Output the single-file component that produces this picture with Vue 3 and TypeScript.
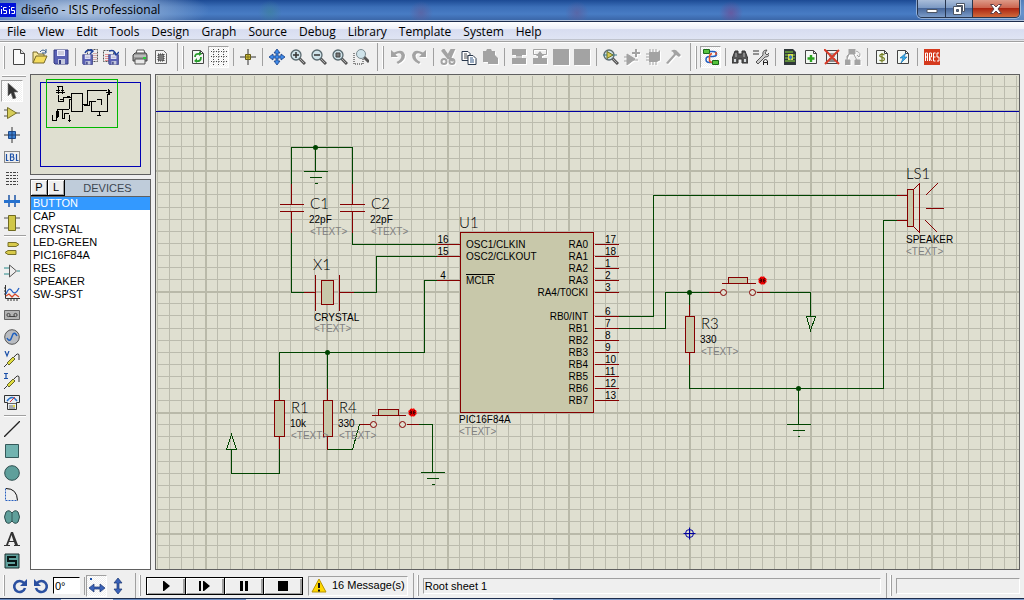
<script setup lang="ts">
import { ref } from 'vue'

interface Tool { id: string; label: string; pressed?: boolean; off?: boolean }
interface Label { x: number; y: number; t: string; kind: string }

const menus = ['File', 'View', 'Edit', 'Tools', 'Design', 'Graph', 'Source', 'Debug', 'Library', 'Template', 'System', 'Help']
const devices = ['BUTTON', 'CAP', 'CRYSTAL', 'LED-GREEN', 'PIC16F84A', 'RES', 'SPEAKER', 'SW-SPST']
const selected = ref('BUTTON')
const angle = ref('0°')

const tool = (id: string, label: string, flags: Partial<Tool> = {}): Tool => ({ id, label, ...flags })

// Bars hold groups, groups hold runs of buttons parted by a thin line.
const bars: Tool[][][] = [
  [
    [tool('new', 'New'), tool('open', 'Open'), tool('save', 'Save')],
    [tool('importSec', 'Import section'), tool('exportSec', 'Export section')],
    [tool('print', 'Print'), tool('area', 'Set area')]
  ],
  [
    [tool('redraw', 'Redraw'), tool('grid', 'Grid', { pressed: true })],
    [tool('origin', 'Origin')],
    [tool('pan', 'Pan'), tool('zoomIn', 'Zoom in'), tool('zoomOut', 'Zoom out'), tool('zoomAll', 'Zoom all'), tool('zoomArea', 'Zoom area')]
  ],
  [
    [tool('undo', 'Undo', { off: true }), tool('redo', 'Redo', { off: true })],
    [tool('cut', 'Cut', { off: true }), tool('copy', 'Copy'), tool('paste', 'Paste', { off: true })],
    [tool('blockCopy', 'Block copy', { off: true }), tool('blockMove', 'Block move', { off: true }), tool('block', 'Block rotate', { off: true }), tool('block', 'Block delete', { off: true })],
    [tool('pick', 'Pick device'), tool('make', 'Make device', { off: true }), tool('pack', 'Packaging tool', { off: true }), tool('hammer', 'Decompose', { off: true })]
  ],
  [
    [tool('router', 'Wire autorouter', { pressed: true })],
    [tool('find', 'Search and tag'), tool('assign', 'Property assignment')],
    [tool('explorer', 'Design explorer'), tool('addSheet', 'New sheet'), tool('delSheet', 'Remove sheet'), tool('parent', 'Exit to parent', { off: true })],
    [tool('bill', 'Bill of materials'), tool('erc', 'Electrical rule check')],
    [tool('ares', 'Netlist to ARES')]
  ]
]

const modes: Tool[][] = [
  [tool('pointer', 'Selection', { pressed: true }), tool('component', 'Component'), tool('junction', 'Junction dot'), tool('lbl', 'Wire label'), tool('script', 'Text script'), tool('bus', 'Bus'), tool('subcircuit', 'Subcircuit')],
  [tool('terminal', 'Terminals'), tool('devicePin', 'Device pins'), tool('graph', 'Graph'), tool('tape', 'Tape recorder'), tool('generator', 'Generator'), tool('vprobe', 'Voltage probe'), tool('iprobe', 'Current probe'), tool('meter', 'Instruments')],
  [tool('line', 'Line'), tool('box', 'Box'), tool('circle', 'Circle'), tool('arc', 'Arc'), tool('shape', 'Path'), tool('letter', 'Text'), tool('symbol', 'Symbol')]
]

const lens = '<path d="M9 9l6 6" stroke="#555" stroke-width="3"/><path d="M10 10l4 4" stroke="#aaa"/><circle cx="6" cy="6" r="5" fill="#cfe3ea" stroke="#5a6a70" stroke-width="1.3"/>'
const sheet = '<path d="M2.500 1.500h8l3 3v10h-11z" fill="#f4f8f4" stroke="#444"/><path d="M10.500 1.500v3h3" fill="none" stroke="#444"/>'
const disk = '<path d="M1 1h14v14H2l-1-1z" fill="#5b62b4" stroke="#353b80"/><path d="M4 1h8v6H4z" fill="#eef"/><path d="M5 10h7v5H5z" fill="#c4c8dd"/><path d="M6 11h2v4H6z" fill="#353b80"/><path d="M5 3h6M5 5h6" stroke="#aab"/>'
const G = '#a3a3a3'

const icons: Record<string, string> = {
  new: '<path d="M2.500.500h7l4 4v11h-11z" fill="#fafafa" stroke="#444"/><path d="M9.500.500v4h4" fill="#ddd" stroke="#444"/>',
  open: '<path d="M1 14V3h4l1 2h6v3" fill="#f5e79a" stroke="#77692a"/><path d="M1 14l3-7h11l-3 7z" fill="#f4dc5e" stroke="#77692a"/><path d="M8 3q3-4 6 0M14 0v4h-4" fill="none" stroke="#345a88"/>',
  save: disk,
  importSec: `<path d="M5.500.500h10v12h-10z" fill="#eee" stroke="#555" stroke-dasharray="2 1"/><path d="M12 4v7M14 4v7" stroke="#b66" stroke-dasharray="1 1"/><g transform="translate(0 5) scale(.7)">${disk}</g><path d="M3 4q2-4 7-2M8 0l3 2-3 3" fill="none" stroke="#1d3f9a" stroke-width="1.400"/>`,
  exportSec: `<path d="M.500 1.500h10v11h-10z" fill="#eee" stroke="#555" stroke-dasharray="2 1"/><path d="M3 5v7M5 5v7" stroke="#d33" stroke-dasharray="1 1"/><g transform="translate(5 5) scale(.7)">${disk}</g><path d="M6 2q6-2 7 4M11 3l2 3 3-3" fill="none" stroke="#1d3f9a" stroke-width="1.400"/>`,
  print: '<path d="M4 5l1-4h7l1 4" fill="#fff" stroke="#555"/><path d="M1 6l2-2h11l1 2v6H1z" fill="#9a9a9a" stroke="#444"/><path d="M3 10h10v5H3z" fill="#e8e8e8" stroke="#555"/><path d="M2 7h12" stroke="#ddd"/><path d="M11 8h3v2h-3z" fill="#2ccb3a"/>',
  area: '<path d="M2.500 1.500h8l3 3v10h-11z" fill="#f2f2f2" stroke="#666"/><path d="M5 5h6v7H5z" fill="#777" stroke="#333" stroke-dasharray="1 1"/>',
  redraw: sheet + '<path d="M5 8q0-4 5-3M11 8q0 5-5 4" fill="none" stroke="#279b2b" stroke-width="1.800"/><path d="M9 2l3 3-3 2zM7 9l-3 3 3 2z" fill="#279b2b"/>',
  grid: '<path d="M2.500 0v16M7.500 0v16M12.500 0v16M0 2.500h16M0 7.500h16M0 12.500h16" stroke="#444" stroke-dasharray="1 1.500"/>',
  origin: '<path d="M8 0v16M0 8h16" stroke="#333"/><path d="M5.500 5.500h5v5h-5z" fill="#d4c23a" stroke="#5f5618"/><path d="M8 5v6M5 8h6" stroke="#7a701c"/>',
  pan: '<path d="M8 0l3 4H9v3h3V5l4 3-4 3V9H9v3h2l-3 4-3-4h2V9H4v2L0 8l4-3v2h3V4H5z" fill="#3f8ae8" stroke="#173f86" stroke-width=".8"/>',
  zoomIn: lens + '<path d="M3 6h6M6 3v6" stroke="#333" stroke-width="1.500"/>',
  zoomOut: lens + '<path d="M3 6h6" stroke="#333" stroke-width="1.500"/>',
  zoomAll: lens + '<path d="M4 4h4v4H4z" fill="#777" stroke="#444"/>',
  zoomArea: `<path d="M1 4v11h9V7" fill="none" stroke="#222" stroke-dasharray="1 1"/><g transform="translate(2 -1)"><path d="M9 9l5 5" stroke="#555" stroke-width="3"/><circle cx="6" cy="6" r="4.500" fill="#cfe3ea" stroke="#7a8a90"/></g>`,
  undo: `<path d="M1 1v7h7L5.500 5.500q5-3 6 1 0 4-5 6.500L8 15q7-3 7-9Q13-1 4 3.500z" fill="${G}"/>`,
  redo: `<path d="M15 1v7H8l2.500-2.500q-5-3-6 1 0 4 5 6.500L8 15Q1 12 1 6 3-1 12 3.500z" fill="${G}"/>`,
  cut: `<path d="M3 0l5 7 4-7h2l-4 9 3 3M2 1l7 9" stroke="${G}" stroke-width="2.500" fill="none"/><circle cx="4" cy="12.500" r="2.500" fill="none" stroke="${G}" stroke-width="2"/><circle cx="12" cy="12.500" r="2.500" fill="none" stroke="${G}" stroke-width="2"/>`,
  copy: '<path d="M1 2.500h6l2 2v7H1z" fill="#fff" stroke="#29384c"/><path d="M3 5h3M3 7h4M3 9h4" stroke="#555"/><path d="M7 6.500h5l3 3v6H7z" fill="#fff" stroke="#29384c"/><path d="M9 9h3M9 11h4M9 13h4" stroke="#345a88"/>',
  paste: `<path d="M1 2h3l1-2h4l1 2h3v4l3 3v6H6v-2H1z" fill="${G}"/>`,
  blockCopy: `<path d="M1 0h14v6h-4v3h4v6H1V9h4V6H1z" fill="${G}"/><path d="M5 8h6" stroke="#ededed"/>`,
  blockMove: `<path d="M1.500.500h13v5h-13z" fill="none" stroke="${G}"/><path d="M8 2l4 5h-2v2h5v6H1V9h5V7H4z" fill="${G}"/>`,
  block: `<path d="M0 0h16v16H0z" fill="${G}"/>`,
  pick: lens + '<path d="M0 6h14" stroke="#387882"/><path d="M4 2.500v7l6-3.500z" fill="#d8c850" stroke="#687228"/>',
  make: `<path d="M12 0v8M8 4h8" stroke="${G}" stroke-width="2"/><path d="M3 5l8 5-8 6zM0 8h4M0 12h4M9 11h5" fill="${G}" stroke="${G}"/>`,
  pack: `<path d="M4 3h9l2-2v10l-3 2H4z" fill="${G}"/><path d="M5 0v16M8 0v16M11 0v16M1 5h14M1 8h14M1 11h14" stroke="${G}"/>`,
  hammer: `<path d="M5 2q4-3 7 1l3 3-2 2-3-2-8 9-2-1 8-9-1-2z" fill="${G}"/>`,
  router: '<path d="M7 2.500h3q3.500 0 3.500 2.500T10 7.500H6.500Q3 7.500 3 10.500t3.500 3H9" fill="none" stroke="#1f5ec2" stroke-width="1.500"/><path d="M13 3v3M9 4.500Q6.500 5 6.500 8v3q0 2.500 3 2.500" fill="none" stroke="#e0522c" stroke-width="1.500"/><path d="M.500.500h6v4h-6zM9.500 11.500h6v4h-6z" fill="#57c43e" stroke="#1c6a18"/>',
  find: '<path d="M3 2h3v3h4V2h3l3 8v4h-6v-4H6v4H0v-4z" fill="#555" stroke="#333"/><path d="M2 10h2v3H2zM12 10h2v3h-2z" fill="#d7dcdf"/><path d="M4 4v4M12 4v4" stroke="#bbb"/>',
  assign: '<path d="M0 2h6M0 5h6" stroke="#333"/><path d="M3 13l7-7q-1-5 4-5l-2 3 2 2 2-2q1 4-4 4l-7 7z" fill="#ccc" stroke="#555"/><path d="M10.500 16v-4l2-2 2 2v4M10.500 13.500h4" fill="none" stroke="#222"/>',
  explorer: '<path d="M2 0h9l3 3v13H2z" fill="#30383a"/><path d="M3 3h8M3 6h10M3 9h10M3 12h10" stroke="#8fe03c"/><path d="M6 5h5v6H6z" fill="#d9e04c"/><path d="M8.500 6l2 2-2 3-2-3z" fill="#3a78c0"/>',
  addSheet: sheet + '<path d="M8 6v7M4.500 9.500h7" stroke="#2aa320" stroke-width="2.400"/>',
  delSheet: '<path d="M2.500 1.500h11v13h-11z" fill="#eee" stroke="#444"/><path d="M5 9h6v4H5z" fill="#888"/><path d="M5 5h6M5 7h6" stroke="#555"/><path d="M0 0l15 15M15 1L1 15" stroke="#d63a28" stroke-width="2"/>',
  parent: `<path d="M4 0h6v5H4zM0 11h5v5H0zM10 11h5v5h-5zM2 11V7l3-3M12 11L8 4" fill="${G}" stroke="${G}"/><path d="M11 2q6 2 3 6l-2-2" fill="none" stroke="${G}"/>`,
  bill: sheet + '<path d="M10.500 6q-2-1.500-4-.500-2 2 1.500 2.700 3.500 1 2 3-2 1.300-4.500 0M8 4v9.500" fill="none" stroke="#79832b" stroke-width="1.300"/>',
  erc: sheet + '<path d="M11 4L5 9h3l-2 5 6-6H9z" fill="#35b0ed" stroke="#1664a6" stroke-width=".6"/>',
  ares: '<path d="M0 0h16v16H0z" fill="#d53a1e"/><path d="M1.500 12V4h2v8M1.500 8h2M5.500 12V4h2v4h-2l2 4M11.500 4h-2v8h2M9.500 8h2M15 4h-2v4h2v4h-2" fill="none" stroke="#fff"/>',
  pointer: '<path d="M4 0v13l3-3 2 6 3-1-2-6h4z" fill="#333" stroke="#777" stroke-width=".6"/>',
  component: '<path d="M0 5h4M0 11h4M12 8h4" stroke="#555"/><path d="M3.500 2.500v11l9-5.500z" fill="#d6cc58" stroke="#777028"/>',
  junction: '<path d="M8 0v16M0 8h16" stroke="#333"/><path d="M4.500 4.500h7v7h-7z" fill="#3e82d4" stroke="#1e4a8a"/><path d="M8 4v8M4 8h8" stroke="#1e3f70"/>',
  lbl: '<path d="M.500 2.500h15v11H.500z" fill="none" stroke="#222" stroke-dasharray="1 1"/><path d="M2.500 5v6.500h2M6.500 5h2q1 0 1 1.500t-1 1.500q1.500 0 1.500 1.500T8.500 11.500h-2zM6.500 8h2M12.500 5v6.500h2" fill="none" stroke="#1b50a8" stroke-width="1.200"/>',
  script: '<path d="M2 1.500h12M2 4.500h12M2 7.500h12M2 10.500h12M2 13.500h12" stroke="#444" stroke-dasharray="3 1 2 1"/>',
  bus: '<path d="M5 2v12M11 2v12" stroke="#1d55a8" stroke-width="1.500"/><path d="M0 8.500h16" stroke="#2672cf" stroke-width="3"/>',
  subcircuit: '<path d="M0 3h4M0 13h4M12 3h4M12 13h4" stroke="#555"/><path d="M4.500.500h7v15h-7z" fill="#d0c748" stroke="#706a20"/>',
  terminal: '<path d="M4 1.500h8l3 2-3 2H4zM12 9.500H4l-3 2 3 2h8z" fill="#d8ca4a" stroke="#77702a"/>',
  devicePin: '<path d="M0 5h5M0 11h5M13 8h3" stroke="#278a8a"/><path d="M5.500 2v12l7-6z" fill="#eee" stroke="#555"/>',
  graph: '<path d="M1.500 0v13.500H16M4 13v3M7 13v3M10 13v3M13 13v3M0 3h2M0 6h2M0 9h2" stroke="#333" fill="none"/><path d="M2 9q3-8 6-3t7-3" fill="none" stroke="#2860c0" stroke-width="1.300"/><path d="M2 11l3-2 3 3 3-3 4 3" fill="none" stroke="#d84828" stroke-width="1.300"/>',
  tape: '<path d="M.500 3.500h15v9H.500z" fill="#b4b4b4" stroke="#666"/><circle cx="4.500" cy="8" r="1.600" fill="none" stroke="#444"/><circle cx="11.500" cy="8" r="1.600" fill="none" stroke="#444"/><path d="M5 9.500h6" stroke="#444"/>',
  generator: '<circle cx="8" cy="8" r="7.300" fill="#b9bcc1" stroke="#555"/><path d="M3 9q2 4 4 1l2-5q2-2 4 2" fill="none" stroke="#1e60bf" stroke-width="1.500"/>',
  vprobe: '<path d="M1 0l2 5 2-5" fill="none" stroke="#1b50a8" stroke-width="1.200"/><path d="M0 16l3-3M10 6q4-5 5-2v5" fill="none" stroke="#333"/><path d="M3 12l6-6 2 2-6 6z" fill="#e0dc40" stroke="#66652a"/>',
  iprobe: '<path d="M0 .500h4M2 .500v5M0 5.500h4" fill="none" stroke="#1b50a8" stroke-width="1.200"/><path d="M0 16l3-3M10 6q4-5 5-2v5" fill="none" stroke="#333"/><path d="M3 12l6-6 2 2-6 6z" fill="#e0dc40" stroke="#66652a"/>',
  meter: '<path d="M.500.500h15v7h-3v7h-9v-7h-3z" fill="#e8eef2" stroke="#333"/><path d="M3 6q5-7 10 0" fill="none" stroke="#2870c8" stroke-width="1.400"/><path d="M6 7l5-5" stroke="#d33"/><path d="M4 8.500h8M5 11h6M5 13h6" stroke="#666"/><path d="M9 10h2v2H9z" fill="#e6d840"/>',
  line: '<path d="M0 16L16 0" stroke="#222" stroke-width="1.300"/>',
  box: '<path d="M1.500 1.500h13v13h-13z" fill="#72b3b0" stroke="#35595a"/>',
  circle: '<circle cx="8" cy="8" r="7.300" fill="#5f9f9b" stroke="#2f4f50"/>',
  arc: '<path d="M1.500 1.500v12h12" fill="none" stroke="#2860c0" stroke-dasharray="2 1"/><path d="M2 1.500q11 0 11.500 12" fill="none" stroke="#111"/>',
  shape: '<path d="M8 4Q5 0 2 3q-3 5 0 10 3 3 6-1 3 4 6 1 3-5 0-10-3-3-6 1z" fill="#5f9f9b" stroke="#2f4f50"/><path d="M8 4v8" stroke="#35595a"/>',
  letter: '<path d="M7 1h2l5 13h2v1h-6v-1h1l-1-3H5l-1 3h2v1H0v-1h2zM5.500 10H9.500L7.500 4z" fill="#333"/>',
  symbol: '<path d="M1 1h14v14H1z" fill="#5fa09c" stroke="#1b2c2d"/><path d="M12 4H4v4h8v4H4" fill="none" stroke="#0a1616" stroke-width="2"/>',
  cw: '<path d="M12 5a5.500 5.500 0 1 0 1 5" fill="none" stroke="#2b50a0" stroke-width="2.600"/><path d="M15 1v7H8z" fill="#2b50a0"/>',
  ccw: '<path d="M4 5a5.500 5.500 0 1 1-1 5" fill="none" stroke="#2b50a0" stroke-width="2.600"/><path d="M1 1v7h7z" fill="#2b50a0"/>',
  mirrorX: '<path d="M1 0l2 2M3 0L1 2" stroke="#1b50a8"/><path d="M0 10l5-4v3h6V6l5 4-5 4v-3H5v3z" fill="#3a62b8" stroke="#1a3570" stroke-width=".7"/>',
  mirrorY: '<path d="M8 0l4 5H9v6h3l-4 5-4-5h3V5H4z" fill="#3a62b8" stroke="#1a3570" stroke-width=".7"/>',
  play: '<path d="M5 3h1l6 5-6 5H5z"/>',
  step: '<path d="M2 3h2v10H2zM6 3h1l6 5-6 5H6z"/>',
  pause: '<path d="M4 3h3v10H4zM9 3h3v10H9z"/>',
  stop: '<path d="M3 3h10v10H3z"/>',
  warn: '<path d="M8 1l7 13H1z" fill="#ffd800" stroke="#b89400"/><path d="M8 5v5M8 11.500v2" stroke="#111" stroke-width="2"/>'
}

const runControls = [tool('play', 'Play'), tool('step', 'Step'), tool('pause', 'Pause'), tool('stop', 'Stop')]

// Grid lines radiate from the sheet origin, ten minor steps to a major one.
const originX = 689
const originY = 533
const step = 12.1
const lattice = (start: number, shift: number, major: boolean): number[] => {
  const out: number[] = []
  for (let k = -50; k <= 150; k++) {
    if ((k % 10 === 0) === major) out.push(Math.floor(start + shift + step * k))
  }
  return out
}
const minorPath = lattice(originX, 0.85, false).map(x => `M${x} 75V3000`).join('') +
  lattice(originY, 0.7, false).map(y => `M156 ${y}H4000`).join('')
const majorX = lattice(originX, 0.85, true)
const majorY = lattice(originY, 0.7, true)

const wires = [
  'M291 183V147H352V183', 'M315 147V171M303 171H327M309 177H321M314 183H317',
  'M291 232V292H303', 'M352 232V244H436', 'M353 292H376V256H436',
  'M436 280H424V352H279V388', 'M327 352V388', 'M279 448V473H231V449',
  'M231 434L226 449H236Z', 'M327 449H352L359 424',
  'M418 424H432V472M420 472H444M426 478H438M431 484H434',
  'M618 316H653V195H896', 'M618 328H665V292H708', 'M689 292V304',
  'M769 292H810V316', 'M806 316H815L810 330Z', 'M689 364V388H883V220H896',
  'M798 388V424M786 424H810M792 430H804M797 436H799'
].join('')

const rightPins: [string, number, string][] = [
  ['RA0', 244, '17'], ['RA1', 256, '18'], ['RA2', 268, '1'], ['RA3', 280, '2'], ['RA4/T0CKI', 292, '3'],
  ['RB0/INT', 316, '6'], ['RB1', 328, '7'], ['RB2', 340, '8'], ['RB3', 352, '9'], ['RB4', 364, '10'],
  ['RB5', 376, '11'], ['RB6', 388, '12'], ['RB7', 400, '13']
]
const leftPins: [string, number, string][] = [['OSC1/CLKIN', 244, '16'], ['OSC2/CLKOUT', 256, '15'], ['MCLR', 280, '4']]

const leads = [
  'M291 183V204M279 204H303M279 211H303M291 211V232',
  'M352 183V204M339 204H364M339 211H364M352 211V232',
  'M303 292H315M315 274V310M339 274V310M339 292H353',
  'M279 388V400M279 436V448M327 388V400M327 436V449',
  'M359 424H370M371 415H405M406 424H418',
  'M708 292H720M721 283H755M756 292H769',
  'M689 304V316M689 352V364',
  'M896 195H907M896 220H907M919 183V232M913 189L919 183M913 226L919 232',
  'M925 195L937 183M925 208H943M925 220L937 232',
  ...rightPins.map(p => `M594 ${p[1]}H618`),
  ...leftPins.map(p => `M436 ${p[1]}H460`)
].join('')

const bodies = [
  [460, 232, 133, 180], [321, 280, 12, 24], [274, 400, 10, 36], [323, 400, 9, 36],
  [378, 409, 20, 6], [728, 277, 19, 6], [685, 316, 9, 36], [907, 189, 6, 37]
]
const dots = [[315, 147], [327, 352], [689, 292], [798, 388]]
const contacts = [[373, 424], [402, 424], [723, 292], [752, 292]]
const toggles = [[412, 412], [762, 280]]

const part = (x: number, y: number, name: string, value: string): Label[] => [
  { x: x + 1, y, t: name, kind: 'name' },
  { x, y: y + 14, t: value, kind: 'value' },
  { x: x + 1, y: y + 26, t: '<TEXT>', kind: 'note' }
]
const label = (x: number, y: number, t: string, kind: string): Label => ({ x, y, t, kind })
const labels: Label[] = [
  ...part(309, 209, 'C1', '22pF'), ...part(370, 209, 'C2', '22pF'),
  ...part(290, 413, 'R1', '10k'), ...part(338, 413, 'R4', '330'), ...part(700, 329, 'R3', '330'),
  label(313, 270, 'X1', 'name'), label(314, 321, 'CRYSTAL', 'value'), label(314, 332, '<TEXT>', 'note'),
  label(459, 228, 'U1', 'name'), label(459, 423, 'PIC16F84A', 'value'), label(459, 435, '<TEXT>', 'note'),
  label(906, 179, 'LS1', 'name'), label(906, 243, 'SPEAKER', 'value'), label(906, 255, '<TEXT>', 'note')
]
</script>

<template>
  <div class="app">
    <header class="title">
      <svg class="logo" width="16" height="14" viewBox="0 0 16 14" aria-hidden="true">
        <path d="M0 0h16v14H0z" fill="#0012d8" />
        <path d="M1.500 6v5M1.500 3v1M6.500 4.500h-3v3h3v3h-3M9.500 6v5M9.500 3v1M14.500 4.500h-3v3h3v3h-3" fill="none" stroke="#fff" />
      </svg>
      <h1>diseño - ISIS Professional</h1>
      <div class="window-buttons">
        <button type="button" class="min" aria-label="Minimize"><svg width="14" height="12" viewBox="0 0 14 12"><path d="M2 6.500h10v3H2z" fill="#fff" stroke="#4c5564" /></svg></button>
        <button type="button" class="max" aria-label="Restore"><svg width="14" height="14" viewBox="0 0 14 14"><path d="M4.500 1.500h8v8h-2v-6h-6z" fill="#fff" stroke="#4c5564" /><path d="M1.500 4.500h8v8h-8z" fill="#fff" stroke="#4c5564" /><path d="M4.500 7.500h2v2h-2z" fill="#56749e" stroke="#4c5564" /></svg></button>
        <button type="button" class="close" aria-label="Close"><svg width="14" height="12" viewBox="0 0 14 12"><path d="M1.500 1.500h3l2.500 2.500 2.500-2.500h3L9 6l3.500 4.500h-3L7 8l-2.500 2.500h-3L5 6z" fill="#fff" stroke="#5e4048" /></svg></button>
      </div>
    </header>

    <nav class="menu" aria-label="Main menu">
      <button v-for="m in menus" :key="m" type="button">{{ m }}</button>
    </nav>

    <div class="toolbar">
      <div v-for="(bar, b) in bars" :key="b" class="bar">
        <div v-for="(run, r) in bar" :key="r" class="run">
          <button v-for="(t, i) in run" :key="i" type="button" class="tool" :class="{ pressed: t.pressed }" :disabled="t.off" :aria-label="t.label">
            <svg width="16" height="16" viewBox="0 0 16 16" fill="#000" v-html="icons[t.id]"></svg>
          </button>
        </div>
      </div>
    </div>

    <main class="work">
      <div class="modes">
        <div v-for="(run, r) in modes" :key="r" class="mode-run">
          <button v-for="t in run" :key="t.id" type="button" class="mode" :class="{ pressed: t.pressed }" :aria-label="t.label">
            <svg width="16" height="16" viewBox="0 0 16 16" v-html="icons[t.id]"></svg>
          </button>
        </div>
      </div>

      <aside class="side">
        <div class="overview">
          <svg width="119" height="99" viewBox="0 0 119 99" fill="none" shape-rendering="crispEdges" role="img" aria-label="Sheet overview">
            <path d="M9.500 7.500h100v84h-100z" stroke="#0000b4" />
            <path d="M15.500 4.500h71v48h-71z" stroke="#00b800" />
            <path d="M40.500 18.500h11v18h-11z" stroke="#000" />
            <path d="M26 11.500h5M27.500 12v7M31.500 11v8M25 17.500h9M25 15.500h4M30 15.500h3M27.500 20v6h5v-4M29 24.500h4M29 26.500h4M32 22.500h8M36 21.500h3M39.500 24.500h-1v9M26 34.500h12M26.500 34v9M27.500 36v6M31.500 35v8h2v-5M21.500 40v5h4v-9M34 38.500h4M38.500 40v7M37 45.500h3M51 29.500h5v-14h20M53 30.500h5v-4h2M75 17.500h6M77.500 14v6M78.500 15v5M76.500 19v17H60.500v-9M59 26.500h6M66 24.500h4v5M68.500 36v5M66 40.500h4" stroke="#000" />
          </svg>
        </div>
        <section class="devices">
          <div class="devices-head">
            <button type="button" aria-label="Pick devices">P</button>
            <button type="button" aria-label="Library manager">L</button>
            <h2>DEVICES</h2>
          </div>
          <ul role="listbox" aria-label="Devices">
            <li v-for="d in devices" :key="d" role="option" :aria-selected="d === selected" :class="{ selected: d === selected }" @click="selected = d">{{ d }}</li>
          </ul>
        </section>
      </aside>

      <div class="canvas">
        <svg class="sheet" width="100%" height="100%" role="img" aria-label="Schematic sheet">
          <g transform="translate(-156 -75)">
            <g transform="translate(.5 .5)" shape-rendering="crispEdges" fill="none">
              <path :d="minorPath" stroke="#bbbbad" />
              <rect v-for="x in majorX" :key="'x' + x" :x="x - 1" y="74" width="2" height="3000" class="major" />
              <rect v-for="y in majorY" :key="'y' + y" x="155" :y="y - 1" width="4000" height="2" class="major" />
              <path d="M155 111H4000" stroke="#0000a0" />
              <rect v-for="(r, i) in bodies" :key="'b' + i" :x="r[0]" :y="r[1]" :width="r[2]" :height="r[3]" fill="#c8c8aa" stroke="#850000" />
              <path :d="leads" stroke="#850000" />
              <path :d="wires" stroke="#004400" />
            </g>
            <g transform="translate(.5 .5)">
              <circle v-for="(c, i) in dots" :key="'d' + i" :cx="c[0]" :cy="c[1]" r="2.500" fill="#004400" />
              <circle v-for="(c, i) in contacts" :key="'c' + i" :cx="c[0]" :cy="c[1]" r="3" fill="#dfdfd0" stroke="#850000" />
              <g v-for="(c, i) in toggles" :key="'t' + i" :transform="`translate(${c[0]} ${c[1]})`">
                <circle r="3.500" fill="#500000" stroke="#f00" stroke-width="1.500" stroke-dasharray="2 .7" />
                <path d="M0-3V3M-2-1L0-3 2-1M-2 1L0 3 2 1" fill="none" stroke="#f00" stroke-width=".8" />
              </g>
              <circle cx="689" cy="533" r="4" fill="none" stroke="#0000a0" />
              <path d="M683 533H695M689 527V539" stroke="#0000a0" />
            </g>
            <text v-for="(l, i) in labels" :key="'l' + i" :x="l.x" :y="l.y" :class="l.kind">{{ l.t }}</text>
            <template v-for="p in rightPins" :key="p[0]">
              <text x="588" :y="p[1] + 4" text-anchor="end" class="value">{{ p[0] }}</text>
              <text x="605" :y="p[1] - 1" class="value">{{ p[2] }}</text>
            </template>
            <template v-for="p in leftPins" :key="p[0]">
              <text x="466" :y="p[1] + 4" class="value">{{ p[0] }}</text>
              <text x="443" :y="p[1] - 1" text-anchor="middle" class="value">{{ p[2] }}</text>
            </template>
            <path d="M466 274h29" transform="translate(0 .5)" stroke="#000" />
          </g>
        </svg>
      </div>
    </main>

    <footer class="bottom">
      <div class="strip rotate">
        <button type="button" class="tool" aria-label="Rotate clockwise"><svg width="16" height="16" viewBox="0 0 16 16" v-html="icons.cw"></svg></button>
        <button type="button" class="tool" aria-label="Rotate anticlockwise"><svg width="16" height="16" viewBox="0 0 16 16" v-html="icons.ccw"></svg></button>
        <input v-model="angle" class="angle" type="text" aria-label="Rotation angle">
        <span class="rule"></span>
        <button type="button" class="tool pressed" aria-label="Mirror horizontally"><svg width="16" height="16" viewBox="0 0 16 16" v-html="icons.mirrorX"></svg></button>
        <button type="button" class="tool" aria-label="Mirror vertically"><svg width="16" height="16" viewBox="0 0 16 16" v-html="icons.mirrorY"></svg></button>
      </div>
      <div class="strip">
        <div class="run-controls">
          <button v-for="c in runControls" :key="c.id" type="button" :aria-label="c.label"><svg width="16" height="16" viewBox="0 0 16 16" v-html="icons[c.id]"></svg></button>
        </div>
        <button type="button" class="messages">
          <svg width="16" height="16" viewBox="0 0 16 16" v-html="icons.warn"></svg>
          <span>16 Message(s)</span>
        </button>
      </div>
      <div class="strip grow"><output class="field">Root sheet 1</output></div>
      <div class="strip last"><output class="field" aria-label="Coordinates"></output></div>
    </footer>
    <div class="desktop"></div>
  </div>
</template>

<style>
body { margin: 0; background: #efefef; }
</style>

<style scoped>
.app {
  box-sizing: border-box;
  min-height: 100vh;
  display: flex;
  flex-direction: column;
  overflow: hidden;
  background: #efefef;
  color: #000;
  font: 11px/13px "Liberation Sans", Arial, sans-serif;
}
button {
  box-sizing: border-box;
  margin: 0;
  padding: 0;
  border: 0;
  background: none;
  color: inherit;
  font: inherit;
}
svg { display: block; flex: none; }
h1, h2, ul { margin: 0; padding: 0; font: inherit; list-style: none; }

.title {
  display: flex;
  align-items: center;
  height: 20px;
  border-bottom: 1px solid #b4c4dc;
  background:
    radial-gradient(ellipse 130px 26px at 80px 10px, rgba(190, 205, 226, .95), rgba(150, 178, 214, .6) 60%, transparent),
    radial-gradient(circle 12px at 270px 12px, rgba(60, 130, 150, .6), transparent),
    radial-gradient(circle 12px at 421px 13px, rgba(100, 90, 150, .6), transparent),
    radial-gradient(circle 12px at 577px 13px, rgba(100, 90, 150, .6), transparent),
    radial-gradient(circle 12px at 731px 13px, rgba(120, 70, 140, .6), transparent),
    linear-gradient(90deg, transparent 90%, rgba(120, 160, 210, .6)),
    linear-gradient(#1c4a94, #3c6fb8 35%, #487cc4 70%, #3a66a8);
}
.title h1 { flex: 1; padding-left: 5px; font: 12px/20px "Open Sans", "Noto Sans", sans-serif; }
.window-buttons {
  display: flex;
  align-self: flex-start;
  height: 18px;
  margin-right: 4px;
  box-sizing: border-box;
  border: 1px solid #28364e;
  border-top: 0;
  border-radius: 0 0 5px 5px;
  overflow: hidden;
  box-shadow: 0 0 0 1px rgba(200, 215, 235, .6);
}
.window-buttons button {
  display: grid;
  place-items: center;
  background: linear-gradient(#a9bdd9, #7d9ac4 45%, #48679a 50%, #7c9cc8);
}
.window-buttons .min { width: 28px; border-right: 1px solid #28364e; }
.window-buttons .max { width: 27px; border-right: 1px solid #28364e; }
.window-buttons .close { width: 46px; background: linear-gradient(#dd9a88, #cc6650 45%, #ac2612 50%, #d06a3c); }

.menu {
  display: flex;
  gap: 12px;
  height: 19px;
  padding-left: 7px;
  border-top: 1px solid #1c2c4c;
  background: linear-gradient(#fff, #eef1f9 35%, #d8ddf0 40%, #dfe4f4 90%, #b8bcc8 91%, #f4f4f4);
}
.menu button { font: 12px/19px "Open Sans", "Noto Sans", sans-serif; }

.toolbar {
  display: flex;
  height: 30px;
  border-top: 1px solid #a0a0a0;
  border-bottom: 1px solid #efefef;
  box-shadow: inset 0 1px #fff;
}
.bar { display: flex; }
.bar::before {
  content: "";
  width: 2px;
  margin: 4px 3px 3px 3px;
  box-sizing: border-box;
  border-left: 1px solid #fff;
  border-right: 1px solid #a0a0a0;
}
.bar + .bar::before { margin-left: 4px; margin-right: 3px; }
.bar:not(:last-child)::after {
  content: "";
  width: 1px;
  margin: 1px 0 1px 6px;
  background: #a0a0a0;
}
.run { display: flex; align-items: center; }
.run + .run::before {
  content: "";
  width: 1px;
  height: 18px;
  margin: 0 3px 0 4px;
  background: #a0a0a0;
}
.tool {
  display: grid;
  place-items: center;
  width: 21px;
  height: 22px;
  flex: none;
}
.tool:disabled { filter: drop-shadow(1px 1px 0 #fff); }
.pressed {
  border: 1px solid;
  border-color: #a0a0a0 #fff #fff #a0a0a0;
  background: repeating-conic-gradient(#fff 0 25%, #efefef 0 50%) 0 0 / 2px 2px;
}

.work {
  flex: 1;
  display: grid;
  grid-template-columns: 30px 121px minmax(0, 1fr);
  padding: 1px 4px 0 0;
}
.modes { padding: 1px 0 0 1px; margin-bottom: -2px; }
.modes::before {
  content: "";
  display: block;
  height: 2px;
  margin: 0 4px 3px 1px;
  box-sizing: border-box;
  border-top: 1px solid #fff;
  border-bottom: 1px solid #a0a0a0;
}
.mode-run + .mode-run::before {
  content: "";
  display: block;
  height: 1px;
  margin: 1px 4px 1px 3px;
  border-bottom: 1px solid #fff;
  background: #a0a0a0;
}
.mode {
  display: grid;
  place-items: center;
  width: 22px;
  height: 22px;
}

.side { display: flex; flex-direction: column; gap: 4px; }
.overview {
  border: 1px solid #606060;
  background: #dfdfd0;
}
.devices {
  flex: 1;
  border: 1px solid #606060;
  background: #fff;
}
.devices-head {
  display: flex;
  height: 16px;
  border-bottom: 1px solid #606060;
  background: #bfccda;
}
.devices-head button {
  width: 17px;
  background: #efefef;
  border: 1px solid #000;
  border-width: 0 1px 1px 0;
  box-shadow: inset 1px 1px #fff, inset -1px -1px #a0a0a0;
  font-size: 11px;
}
.devices-head h2 { flex: 1; text-align: center; color: #3c4650; font-size: 11px; line-height: 16px; }
.devices li { padding-left: 2px; line-height: 13px; }
.devices .selected { background: #3399ff; color: #fff; }

.canvas {
  margin-left: 4px;
  position: relative;
  border: 1px solid #606060;
  background: #dfdfd0;
  overflow: hidden;
}
.sheet { position: absolute; inset: 0; font-family: "Liberation Sans", Arial, sans-serif; }
.major { fill: #b9b9a9; }
.name { font: 300 15px Lato, "Liberation Sans", sans-serif; }
.value { font-size: 10px; }
.note { font-size: 10px; fill: #808080; }

.bottom { display: flex; height: 28px; }
.strip { display: flex; align-items: center; padding: 3px 0 0 3px; }
.strip::before {
  content: "";
  align-self: stretch;
  width: 2px;
  margin: 2px 4px 2px 0;
  box-sizing: border-box;
  border-left: 1px solid #fff;
  border-right: 1px solid #a0a0a0;
}
.strip:not(:last-child)::after {
  content: "";
  align-self: stretch;
  width: 1px;
  margin-left: 5px;
  background: #a0a0a0;
}
.angle {
  box-sizing: border-box;
  width: 27px;
  height: 17px;
  margin-left: 2px;
  padding: 0 1px;
  border: 1px solid;
  border-color: #000 #fff #fff #000;
  border-radius: 0;
  background: #fff;
  font: 11px/14px "Liberation Sans", Arial, sans-serif;
}
.rule { width: 1px; height: 18px; margin: 0 1px 0 4px; background: #a0a0a0; }
.strip.rotate::after { margin-left: 7px; }
.run-controls {
  display: flex;
  gap: 1px;
  margin-left: 1px;
  padding: 1px;
  background: #000;
}
.run-controls button {
  display: grid;
  place-items: center;
  width: 38px;
  height: 16px;
  background: #efefef;
  box-shadow: inset 1px 1px #fff, inset -2px -1px #a0a0a0;
}
.messages {
  display: flex;
  align-items: center;
  gap: 5px;
  height: 20px;
  margin-left: 5px;
  padding: 0 2px;
  border: 1px solid;
  border-color: #a0a0a0 #fff #fff #a0a0a0;
  white-space: nowrap;
}
.grow { flex: 1; }
.last { width: 134px; }
.field {
  flex: 1;
  box-sizing: border-box;
  height: 16px;
  padding-left: 1px;
  border: 1px solid;
  border-color: #a0a0a0 #fff #fff #a0a0a0;
  line-height: 14px;
}
.last .field { margin-right: 4px; }
.desktop {
  height: 1px;
  border-top: 1px solid #1c2c4c;
  background: linear-gradient(90deg, #6a8cc0 6%, #dfe8f4 6% 11%, #6a8cc0 11% 24%, #dfe8f4 24% 54%, #7d9ccb 54%);
}
</style>
